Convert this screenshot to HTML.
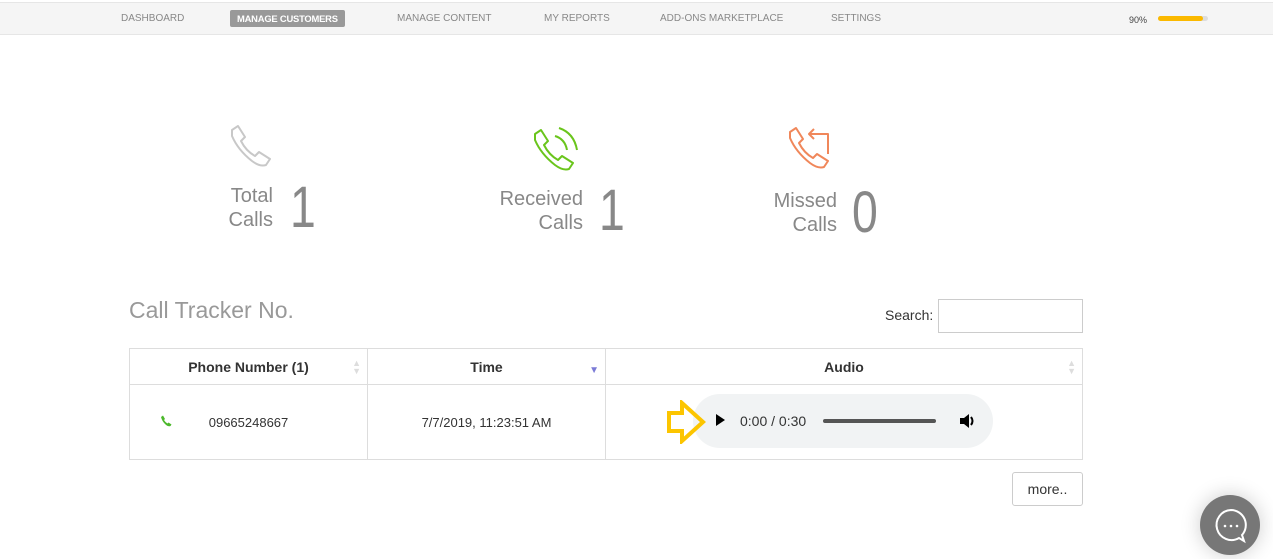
<!DOCTYPE html>
<html><head><meta charset="utf-8"><style>
body{margin:0;width:1273px;height:559px;background:#fff;font-family:"Liberation Sans",sans-serif;position:relative;overflow:hidden}
.nav{position:absolute;left:0;top:2px;width:1273px;height:31px;background:#f5f5f5;border-top:1px solid #e6e6e6;border-bottom:1px solid #e6e6e6}
.nav span{position:absolute;top:10px;font-size:10px;color:#888}
.pill{background:#999;color:#fff!important;padding:3px 7px;top:7px!important;border-radius:2px;font-weight:bold;font-size:9.4px!important;letter-spacing:-0.2px}
.ab{position:absolute}
.lbl{font-size:20px;color:#888;text-align:right;line-height:24px}
.num{font-size:58px;color:#888;transform:scaleX(0.8);transform-origin:left}
table{position:absolute;left:129px;top:348px;width:954px;border-collapse:collapse;font-size:13px;color:#333;table-layout:fixed}
td,th{border:1px solid #ddd;text-align:center;padding:0}
th{height:35px;font-weight:bold;font-size:14px;color:#333}
td{height:74px}
</style></head><body>
<div class="nav">
<span style="left:121px">DASHBOARD</span>
<span class="pill" style="left:230px">MANAGE CUSTOMERS</span>
<span style="left:397px">MANAGE CONTENT</span>
<span style="left:544px">MY REPORTS</span>
<span style="left:660px">ADD-ONS MARKETPLACE</span>
<span style="left:831px">SETTINGS</span>
<span style="left:1129px;top:12px;font-size:9px;color:#444">90%</span>
<div class="ab" style="left:1158px;top:13px;width:50px;height:5px;border-radius:3px;background:#ddd"><div style="width:45px;height:5px;border-radius:3px;background:#fbb900"></div></div>
</div>

<svg class="ab" style="left:228px;top:124px" width="44" height="44" viewBox="0 0 44 44" fill="none" stroke="#c8c8c8" stroke-width="2" stroke-linejoin="round"><path d="M4 6 L10 2 L17 13 L13 17 Q18 27 27 32 L31 28 L42 35 L38 41 Q32 43 24 37 Q10 26 4 12 Z"/></svg>
<svg class="ab" style="left:533px;top:125px" width="46" height="46" viewBox="0 0 46 46" fill="none" stroke="#6ac51c" stroke-width="2" stroke-linejoin="round"><path d="M2 9 L8 5 L15 16 L11 20 Q16 30 25 35 L29 31 L40 38 L36 44 Q30 46 22 40 Q8 29 2 15 Z"/><path d="M22 11 Q32 14 34 25"/><path d="M26 3 Q41 8 44 25"/></svg>
<svg class="ab" style="left:786px;top:124px" width="48" height="48" viewBox="0 0 48 48" fill="none" stroke="#f0875a" stroke-width="2" stroke-linejoin="round"><path d="M4 8 L10 4 L17 15 L13 19 Q18 29 27 34 L31 30 L42 37 L38 43 Q32 45 24 39 Q10 28 4 14 Z"/><path d="M42 30 L42 10 L23 10 M28 5 L23 10 L28 15"/></svg>

<div class="ab lbl" style="left:200px;top:184px;width:73px">Total<br>Calls</div>
<div class="ab num" style="left:290px;top:174px">1</div>
<div class="ab lbl" style="left:480px;top:187px;width:103px">Received<br>Calls</div>
<div class="ab num" style="left:599px;top:177px">1</div>
<div class="ab lbl" style="left:750px;top:189px;width:87px">Missed<br>Calls</div>
<div class="ab num" style="left:852px;top:179px">0</div>

<div class="ab" style="left:129px;top:297px;font-size:23px;color:#999">Call Tracker No.</div>
<div class="ab" style="left:885px;top:307px;font-size:14px;color:#333">Search:</div>
<div class="ab" style="left:938px;top:299px;width:143px;height:32px;border:1px solid #ccc"></div>

<table>
<tr><th style="width:237px;position:relative">Phone Number (1)<span style="position:absolute;right:6px;top:10px;color:#ddd;font-size:9px;line-height:8px">▲<br>▼</span></th>
<th style="width:237px;position:relative">Time<span style="position:absolute;right:6px;top:16px;color:#7b7bd6;font-size:10px">▼</span></th>
<th style="position:relative">Audio<span style="position:absolute;right:6px;top:10px;color:#ddd;font-size:9px;line-height:8px">▲<br>▼</span></th></tr>
<tr><td style="position:relative"><svg style="position:absolute;left:30px;top:30px" width="12" height="12" viewBox="0 0 12 12"><path d="M1 2 L3 0.5 L5 4 L4 5 Q5.5 7.5 7.5 8.5 L8.5 7.5 L11.5 9.5 L10.5 11 Q8 12 5 9 Q2 6 1 2Z" fill="#4cb82c"/></svg>09665248667</td><td>7/7/2019, 11:23:51 AM</td><td></td></tr>
</table>

<div class="ab" style="left:693px;top:394px;width:300px;height:54px;border-radius:27px;background:#f1f3f4"></div>
<div class="ab" style="left:716px;top:414px;width:0;height:0;border-left:9px solid #000;border-top:6px solid transparent;border-bottom:6px solid transparent"></div>
<div class="ab" style="left:740px;top:413px;font-size:14px;color:#333">0:00 / 0:30</div>
<div class="ab" style="left:823px;top:419px;width:113px;height:4px;border-radius:2px;background:#555"></div>
<svg class="ab" style="left:959px;top:413px" width="18" height="16" viewBox="0 0 18 16"><path d="M1 5h4l5-4v14l-5-4H1z" fill="#000"/><path d="M12 4q3 4 0 8" stroke="#000" stroke-width="2" fill="none"/></svg>
<svg class="ab" style="left:666px;top:400px" width="44" height="44" viewBox="0 0 44 44"><path d="M3 13 H16 V3 L37 22 L16 41 V31 H3 Z" fill="none" stroke="#fcc500" stroke-width="4" stroke-linejoin="miter"/></svg>

<div class="ab" style="left:1012px;top:472px;width:69px;height:32px;border:1px solid #ccc;border-radius:3px;font-size:14px;color:#333;text-align:center;line-height:32px">more..</div>

<div class="ab" style="left:1200px;top:495px;width:60px;height:60px;border-radius:50%;background:#777;box-shadow:0 0 20px rgba(0,0,0,.2)"></div>
<svg class="ab" style="left:1210px;top:505px" width="42" height="42" viewBox="0 0 42 42"><path d="M21 5a15 15 0 1 0 8 28l5 3-2-6A15 15 0 0 0 21 5z" fill="none" stroke="#fff" stroke-width="2"/><circle cx="15" cy="21" r="1.3" fill="#fff"/><circle cx="21" cy="21" r="1.3" fill="#fff"/><circle cx="27" cy="21" r="1.3" fill="#fff"/></svg>
</body></html>
